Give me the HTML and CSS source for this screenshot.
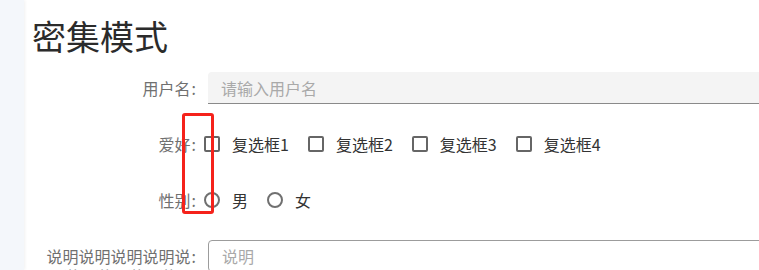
FILE: index.html
```html
<!DOCTYPE html>
<html lang="zh-CN">
<head>
<meta charset="utf-8">
<title>密集模式</title>
<link rel="stylesheet" href="styles.css">
</head>
<body>
<aside class="sidebar"></aside>
<main class="content">
  <h1 class="title">密集模式</h1>
  <form class="form">
    <div class="row">
      <label class="field-label"><span class="label-text">用户名</span><span class="colon">:</span></label>
      <input class="input input-filled" type="text" placeholder="请输入用户名">
    </div>
    <div class="row">
      <label class="field-label"><span class="label-text">爱好</span><span class="colon">:</span></label>
      <div class="options">
        <label class="option"><span class="checkbox"></span><span>复选框1</span></label>
        <label class="option"><span class="checkbox"></span><span>复选框2</span></label>
        <label class="option"><span class="checkbox"></span><span>复选框3</span></label>
        <label class="option"><span class="checkbox"></span><span>复选框4</span></label>
      </div>
    </div>
    <div class="row">
      <label class="field-label"><span class="label-text">性别</span><span class="colon">:</span></label>
      <div class="options">
        <label class="option"><span class="radio"></span><span>男</span></label>
        <label class="option"><span class="radio"></span><span>女</span></label>
      </div>
    </div>
    <div class="row">
      <label class="field-label field-label-multi"><span class="label-text">说明说明说明说明说明说明说明说明说明</span><span class="colon">:</span></label>
      <input class="input input-outlined" type="text" placeholder="说明">
    </div>
  </form>
</main>
<div class="highlight"></div>
</body>
</html>
```

FILE: styles.css
```css
html, body {
  margin: 0;
  padding: 0;
  height: 100%;
  overflow: hidden;
}

body {
  display: flex;
  background: #ffffff;
  font-family: "Noto Sans CJK SC", "Noto Sans", sans-serif;
  font-size: 16px;
  color: #333333;
}

.sidebar {
  width: 24px;
  flex: none;
  background: #f4f7fb;
  box-shadow: 1px 0 3px rgba(0, 0, 0, 0.06);
}

.content {
  flex: 1;
  min-width: 0;
  padding: 15px 0 0 8px;
}

.title {
  margin: 0;
  font-size: 34px;
  font-weight: 400;
  line-height: 42px;
  color: #2b2b2b;
}

.form {
  margin-top: 15px;
  display: flex;
  flex-direction: column;
  gap: 24px;
}

.row {
  display: grid;
  grid-template-columns: 164px 1fr;
  column-gap: 12px;
  height: 32px;
  align-items: start;
}

.field-label {
  display: flex;
  justify-content: flex-end;
  align-items: flex-start;
  line-height: 32px;
  color: #707070;
}

.label-text {
  text-align: right;
}

.colon {
  flex: none;
  padding-left: 1px;
}

.field-label-multi {
  line-height: 20px;
  padding-top: 6px;
}

.field-label-multi .label-text {
  max-width: 150px;
}

.input {
  box-sizing: border-box;
  height: 32px;
  width: calc(100% + 8px);
  padding: 0 13px;
  font-family: inherit;
  font-size: 16px;
  color: #333333;
  outline: none;
}

.input::placeholder {
  color: #a9a9a9;
}

.input-filled {
  background: #f4f4f4;
  border: none;
  border-bottom: 1px solid #8a8a8a;
  border-radius: 4px 4px 0 0;
}

.input-outlined {
  background: #ffffff;
  border: 1px solid #9c9c9c;
  border-radius: 4px;
}

.options {
  display: flex;
  align-items: center;
  height: 32px;
  margin-left: -4px;
  gap: 19px;
}

.option {
  display: flex;
  align-items: center;
  gap: 12px;
  color: #333333;
  line-height: 32px;
}

.checkbox {
  flex: none;
  box-sizing: border-box;
  width: 16px;
  height: 16px;
  border: 2px solid #666666;
  border-radius: 2px;
}

.radio {
  flex: none;
  box-sizing: border-box;
  width: 16px;
  height: 16px;
  border: 2px solid #707070;
  border-radius: 50%;
}

.highlight {
  position: absolute;
  left: 182px;
  top: 113px;
  width: 32px;
  height: 101px;
  box-sizing: border-box;
  border: 3px solid #f5221b;
  border-radius: 3px;
}
```
